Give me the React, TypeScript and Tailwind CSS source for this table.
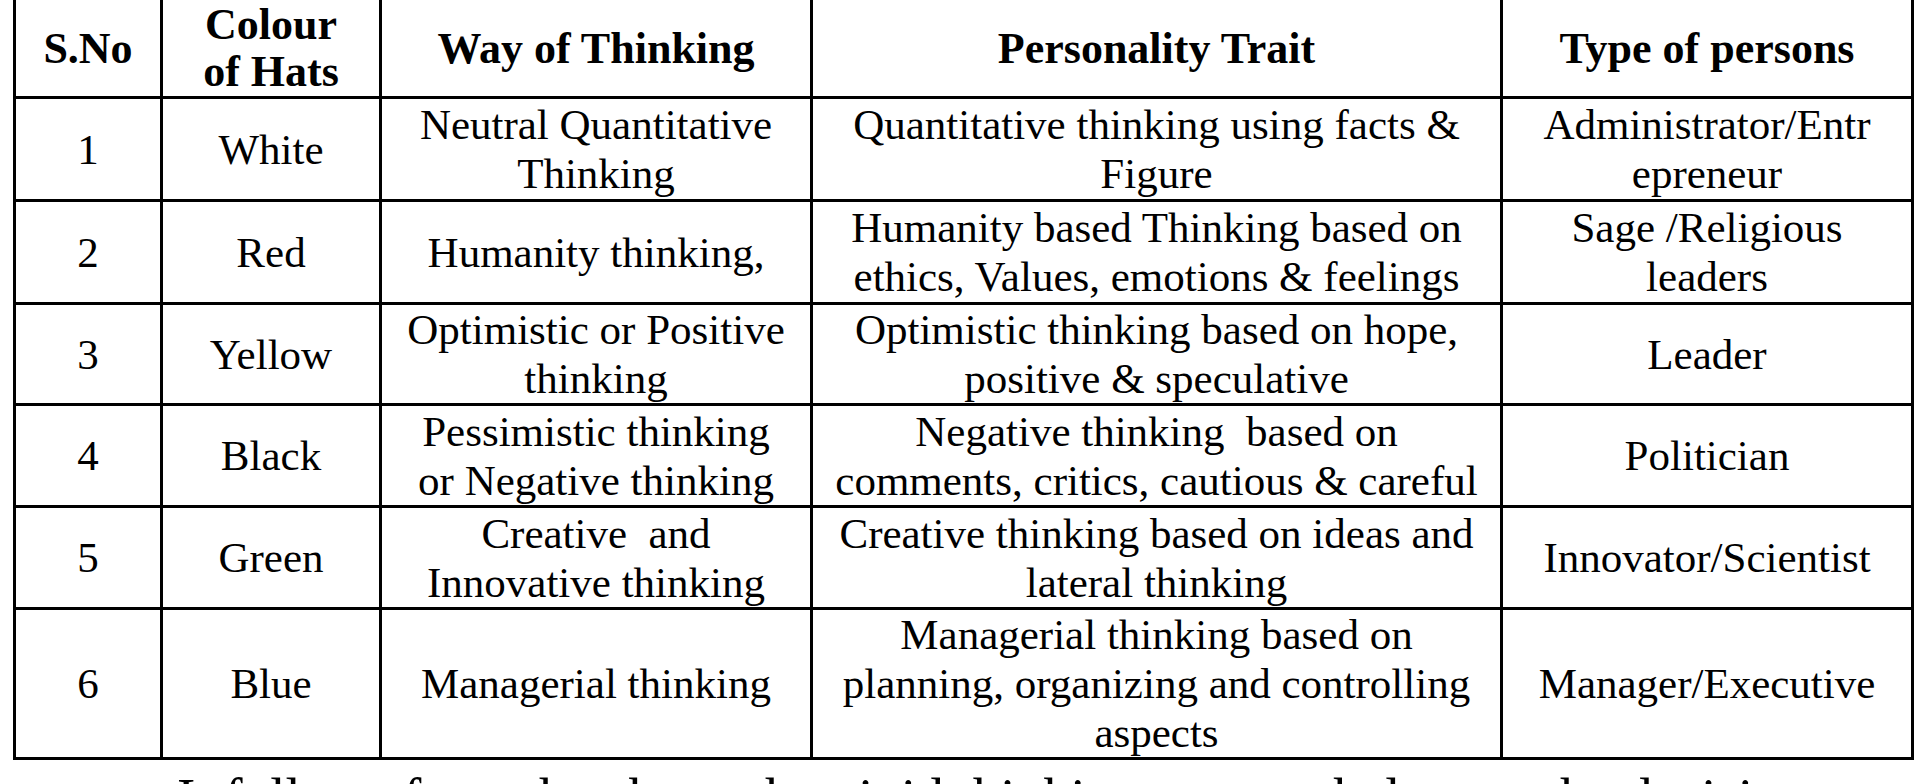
import React from 'react'

const rows = [
  ['1', 'White', ['Neutral Quantitative', 'Thinking'], ['Quantitative thinking using facts &', 'Figure'], ['Administrator/Entr', 'epreneur']],
  ['2', 'Red', ['Humanity thinking,'], ['Humanity based Thinking based on', 'ethics, Values, emotions & feelings'], ['Sage /Religious', 'leaders']],
  ['3', 'Yellow', ['Optimistic or Positive', 'thinking'], ['Optimistic thinking based on hope,', 'positive & speculative'], ['Leader']],
  ['4', 'Black', ['Pessimistic thinking', 'or Negative thinking'], ['Negative thinking  based on', 'comments, critics, cautious & careful'], ['Politician']],
  ['5', 'Green', ['Creative  and', 'Innovative thinking'], ['Creative thinking based on ideas and', 'lateral thinking'], ['Innovator/Scientist']],
  ['6', 'Blue', ['Managerial thinking'], ['Managerial thinking based on', 'planning, organizing and controlling', 'aspects'], ['Manager/Executive']],
] as const

function Cell({ lines, bold }: { lines: readonly string[]; bold?: boolean }) {
  return (
    <div className={'flex flex-col items-center justify-center bg-white text-center ' + (bold ? 'pt-[4px] text-[44px] font-bold leading-[47px]' : '')}>
      {lines.map((l, i) => (
        <span key={i} className='whitespace-pre'>
          {l}
        </span>
      ))}
    </div>
  )
}

export default function App() {
  return (
    <div
      className='h-[784px] w-[1921px] overflow-hidden bg-white text-black'
      style={{ fontFamily: '"Liberation Serif", "Times New Roman", serif' }}
    >
      <div className='ml-[13px] -mt-[7px] w-[1901px] grid grid-cols-[144px_216px_428px_687px_408px] grid-rows-[100px_100px_100px_98px_99px_99px_147px] gap-[3px] bg-black p-[3px] text-[43px] leading-[49px]'>
        <Cell bold lines={['S.No']} />
        <Cell bold lines={['Colour', 'of Hats']} />
        <Cell bold lines={['Way of Thinking']} />
        <Cell bold lines={['Personality Trait']} />
        <Cell bold lines={['Type of persons']} />
        {rows.map((r) => (
          <React.Fragment key={r[0]}>
            <Cell lines={[r[0]]} />
            <Cell lines={[r[1]]} />
            <Cell lines={r[2]} />
            <Cell lines={r[3]} />
            <Cell lines={r[4]} />
          </React.Fragment>
        ))}
      </div>
      <p className='mt-[6px] pl-[177px] whitespace-nowrap text-[55px] leading-[64px]'>
        It follows from the above the vivid thinking process helps to take decision
      </p>
    </div>
  )
}
